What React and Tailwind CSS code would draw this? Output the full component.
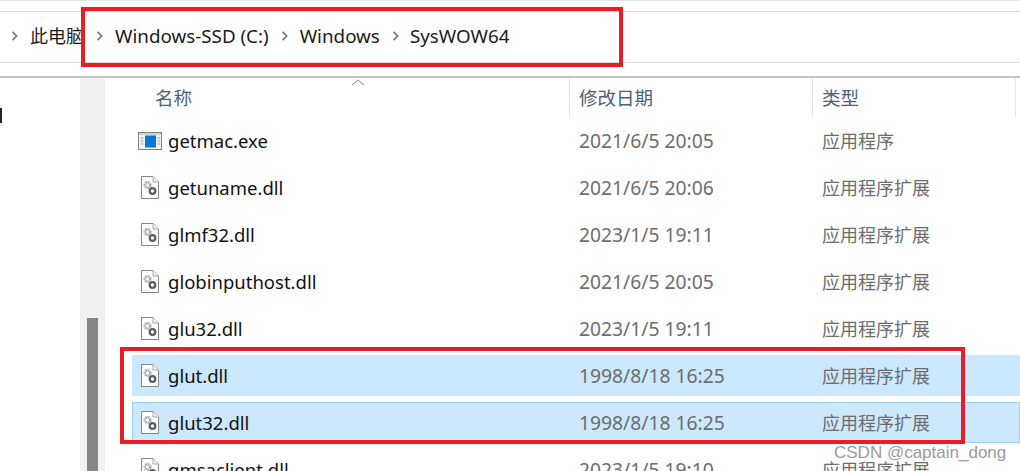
const FONT = "font-['Noto_Sans','Noto_Sans_CJK_SC',sans-serif]";

function Chevron() {
  return (
    <svg width="8" height="12" viewBox="0 0 8 12" className="shrink-0">
      <path d="M1.6 1.8 L5.6 6 L1.6 10.2" fill="none" stroke="#7a7a7a" strokeWidth="1.8" />
    </svg>
  );
}

function DllIcon() {
  return (
    <svg width="18" height="23" viewBox="0 0 18 23" className="shrink-0">
      <path d="M0.5 0.5 H12 L17.5 6 V22.5 H0.5 Z" fill="#fff" stroke="#858585" strokeWidth="1" />
      <path d="M12 0.5 V6 H17.5" fill="#f2f2f2" stroke="#a8a8a8" strokeWidth="1" />
      <circle cx="6.5" cy="9" r="2.7" fill="none" stroke="#a4acb4" strokeWidth="2.6" strokeDasharray="1.8 0.7" />
      <circle cx="11.5" cy="15" r="2.8" fill="none" stroke="#595e62" strokeWidth="2.2" />
    </svg>
  );
}

function ExeIcon() {
  return (
    <svg width="24" height="18" viewBox="0 0 24 18" className="shrink-0">
      <rect x="0.5" y="0.5" width="23" height="17" fill="#f4f4f4" stroke="#808080" />
      <rect x="1" y="1" width="22" height="2" fill="#d0d0d0" />
      <rect x="7" y="3.5" width="11" height="12" fill="#0a78d0" />
      <path d="M2.5 6H5.5M2.5 9H5.5M2.5 12H5.5M19.5 6H22M19.5 9H22M19.5 12H22" stroke="#a0a0a0" strokeWidth="1" />
    </svg>
  );
}

const rows = [
  ["getmac.exe", "2021/6/5 20:05", "应用程序", "exe"],
  ["getuname.dll", "2021/6/5 20:06", "应用程序扩展"],
  ["glmf32.dll", "2023/1/5 19:11", "应用程序扩展"],
  ["globinputhost.dll", "2021/6/5 20:05", "应用程序扩展"],
  ["glu32.dll", "2023/1/5 19:11", "应用程序扩展"],
  ["glut.dll", "1998/8/18 16:25", "应用程序扩展", "sel"],
  ["glut32.dll", "1998/8/18 16:25", "应用程序扩展", "focus"],
  ["gmsaclient.dll", "2023/1/5 19:10", "应用程序扩展"],
];

function Row({ name, date, type, kind }) {
  const bg =
    kind === "sel"
      ? "bg-[#cce8ff] border border-transparent"
      : kind === "focus"
        ? "bg-[#cce8ff] border border-[#99d1ff]"
        : "border border-transparent";
  return (
    <div className={`flex items-center h-[41px] shrink-0 ${bg}`}>
      <div className="w-[33px] flex justify-center shrink-0">
        {kind === "exe" ? <ExeIcon /> : <DllIcon />}
      </div>
      <div className="w-[413px] pl-[2px] pt-[1px] shrink-0 text-[18.5px] text-[#111] whitespace-nowrap">{name}</div>
      <div className="w-[243px] pt-[2px] shrink-0 text-[19.3px] text-[#6d6d6d] whitespace-nowrap">{date}</div>
      <div className="pt-[2px] text-[18px] text-[#6d6d6d] whitespace-nowrap">{type}</div>
    </div>
  );
}

export default function App() {
  return (
    <div className={`relative w-[1020px] h-[471px] overflow-hidden bg-white ${FONT}`}>
      <div className="h-[1px] bg-[#e3e8ec]" />
      <div className="h-[10px]" />
      {/* address bar */}
      <div className="h-[52px] border-y border-[#dcdcdc] flex items-center pl-[11px] pb-[2px] text-[18.8px] text-[#1a1a1a] whitespace-nowrap">
        <Chevron />
        <span className="ml-[11px] w-[52px] text-[18px]">此电脑</span>
        <span className="ml-[14px]"><Chevron /></span>
        <span className="ml-[11px]">Windows-SSD (C:)</span>
        <span className="ml-[12px]"><Chevron /></span>
        <span className="ml-[11px]">Windows</span>
        <span className="ml-[12px]"><Chevron /></span>
        <span className="ml-[10px]">SysWOW64</span>
      </div>
      <div className="h-[13px]" />
      <div className="h-[2px] bg-[#c4c4c4]" />

      {/* body */}
      <div className="flex h-[393px]">
        {/* nav pane */}
        <div className="w-[80px] shrink-0 relative">
          <div className="absolute left-0 top-[30px] w-[2px] h-[15px] bg-[#1d2733]" />
        </div>
        {/* scrollbar */}
        <div className="w-[25px] shrink-0 bg-[#f0f0f0] flex flex-col pt-[240px] pl-[7px]">
          <div className="w-[11px] flex-1 bg-[#858585]" />
        </div>
        {/* list */}
        <div className="flex-1 min-w-0 relative pl-[27px]">
          <svg width="14" height="7" viewBox="0 0 14 7" className="absolute left-[246px] top-[1px]">
            <path d="M1 6 L7 1 L13 6" fill="none" stroke="#808080" strokeWidth="1" />
          </svg>
          <div className="flex h-[39px] text-[18.5px] text-[#4c607a] whitespace-nowrap">
            <div className="w-[438px] pl-[23px] pt-[6px] border-r border-[#e5e5e5] shrink-0">名称</div>
            <div className="w-[243px] pl-[9px] pt-[6px] border-r border-[#e5e5e5] shrink-0">修改日期</div>
            <div className="w-[203px] pl-[9px] pt-[6px] border-r border-[#e5e5e5] shrink-0">类型</div>
          </div>
          <div className="flex flex-col gap-[6px] pt-[3px]">
            {rows.map((r) => (
              <Row key={r[0]} name={r[0]} date={r[1]} type={r[2]} kind={r[3]} />
            ))}
          </div>
        </div>
      </div>

      {/* annotation overlays */}
      <div className="absolute left-[81px] top-[7px] w-[542px] h-[60px] border-[4px] border-[#ed1c24]" />
      <div className="absolute left-[120px] top-[347px] w-[845px] h-[97px] border-[4px] border-[#ed1c24]" />
      <div className="absolute left-[834px] top-[442px] text-[17px] leading-[22px] text-[#9a9a9a] font-['Liberation_Sans',sans-serif] whitespace-nowrap">
        CSDN @captain_dong
      </div>
    </div>
  );
}
